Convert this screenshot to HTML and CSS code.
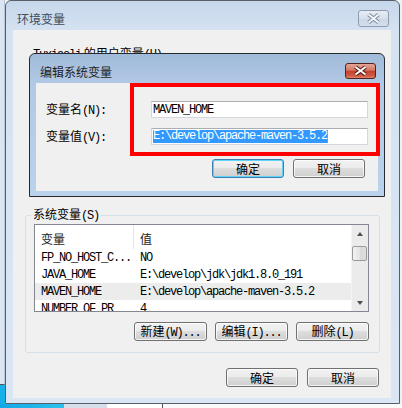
FILE: index.html
```html
<!DOCTYPE html>
<html lang="zh-CN">
<head>
<meta charset="utf-8">
<title>环境变量</title>
<link rel="stylesheet" href="styles.css">
</head>
<body>
<div class="screen">
  <div class="side-left">
    <div class="behind"></div>
    <div class="desk"></div>
  </div>

  <div class="win">
    <div class="titlebar">
      <span class="title">环境变量</span>
      <span class="cap-close inactive">
        <svg width="31" height="17" viewBox="0 0 31 17"><path d="M10.5 4.5 L20.5 12.5 M20.5 4.5 L10.5 12.5" class="xo"/><path d="M10.5 4.5 L20.5 12.5 M20.5 4.5 L10.5 12.5" class="xi"/></svg>
      </span>
    </div>
    <div class="client">
      <div class="user-label"><span class="m">Tuxiaoli</span> 的用户变量<span class="m">(U)</span></div>

      <fieldset class="group">
        <legend class="group-title">系统变量<span class="m">(S)</span></legend>
        <div class="list">
          <div class="list-body">
            <div class="row head"><div class="c1">变量</div><div class="c2">值</div></div>
            <div class="row"><div class="c1 m">FP_NO_HOST_C...</div><div class="c2 m">NO</div></div>
            <div class="row"><div class="c1 m">JAVA_HOME</div><div class="c2 m">E:\develop\jdk\jdk1.8.0_191</div></div>
            <div class="row hl"><div class="c1 m">MAVEN_HOME</div><div class="c2 m">E:\develop\apache-maven-3.5.2</div></div>
            <div class="row"><div class="c1 m">NUMBER_OF_PR</div><div class="c2 m">4</div></div>
          </div>
          <div class="scrollbar">
            <div class="sb-btn"><span class="tri up"></span></div>
            <div class="thumb"></div>
            <div class="sb-track"></div>
            <div class="sb-btn"><span class="tri down"></span></div>
          </div>
        </div>
        <div class="btn-row">
          <button class="btn w73">新建<span class="m">(W)...</span></button>
          <button class="btn w73">编辑<span class="m">(I)...</span></button>
          <button class="btn w73">删除<span class="m">(L)</span></button>
        </div>
      </fieldset>

      <div class="footer">
        <button class="btn w72">确定</button>
        <button class="btn w72">取消</button>
      </div>
    </div>
  </div>

  <div class="side-right"></div>

  <div class="taskbar">
    <div class="tb-cyan"></div>
    <div class="tb-grey"></div>
    <div class="tb-white"></div>
    <div class="tb-rest"></div>
  </div>

  <div class="dialog">
    <div class="dlg-titlebar">
      <span class="dlg-title">编辑系统变量</span>
      <span class="cap-close active">
        <svg width="31" height="16" viewBox="0 0 31 16"><path d="M10.5 4 L20.5 11.5 M20.5 4 L10.5 11.5" class="xo"/><path d="M10.5 4 L20.5 11.5 M20.5 4 L10.5 11.5" class="xi"/></svg>
      </span>
    </div>
    <div class="dlg-client">
      <div class="form">
        <label class="lbl">变量名<span class="m">(N):</span></label>
        <div class="field"><span class="m">MAVEN_HOME</span></div>
        <label class="lbl">变量值<span class="m">(V):</span></label>
        <div class="field"><span class="m sel">E:\develop\apache-maven-3.5.2</span></div>
      </div>
      <div class="dlg-buttons">
        <button class="btn w72 default">确定</button>
        <button class="btn w72">取消</button>
      </div>
    </div>
  </div>

  <div class="annot"></div>
</div>
</body>
</html>
```

FILE: styles.css
```css
* { box-sizing: border-box; }
html, body { margin: 0; padding: 0; }
body {
  width: 402px;
  height: 408px;
  overflow: hidden;
  background: #f5f7fa;
  font-family: "Noto Sans CJK SC", "Noto Sans", sans-serif;
  font-size: 12px;
  color: #000;
}
.m {
  font-family: "Liberation Mono", "Noto Sans CJK SC", monospace;
  font-size: 12px;
  letter-spacing: -1.2px;
}

.screen {
  position: relative;
  width: 402px;
  height: 408px;
  display: grid;
  grid-template-columns: 5px 395px 2px;
  grid-template-rows: 404px 4px;
}

/* desktop pieces */
.side-left { display: flex; flex-direction: column; }
.behind { height: 385px; background: #dbe6f2; border-bottom: 1px solid #4e535a; border-right: 1px solid #b8c6d6; }
.desk { flex: 1; background: #17b1ea; }
.side-right { background: #eef2f7; }
.taskbar { grid-column: 1 / 4; display: flex; }
.tb-cyan { width: 64px; background: linear-gradient(90deg, #12a8e6, #2bc1ef); }
.tb-grey { width: 43px; background: #d6dee9; }
.tb-white { width: 56px; background: #fff; border-right: 1px solid #4e535a; }
.tb-rest { flex: 1; background: #fafafa; }

/* outer window */
.win {
  display: flex;
  flex-direction: column;
  border: 1px solid #5a5f67;
  border-radius: 6px 6px 0 0;
  background: linear-gradient(#c7d7eb 0, #d4e2f1 30px, #dae6f4 100%);
  padding: 0 8px 5px 7px;
}
.titlebar {
  height: 29px;
  display: flex;
  align-items: flex-start;
  justify-content: space-between;
}
.title { margin: 10px 0 0 4px; line-height: 16px; color: #404b58; }

.cap-close {
  display: block;
  width: 31px;
  height: 17px;
  margin: 9px 2px 0 0;
  border-radius: 3px;
}
.cap-close svg { display: block; }
.cap-close.inactive {
  border: 1px solid #8f9cad;
  background: linear-gradient(#e6edf5, #d6e0ec 50%, #cbd7e5 51%, #d3dfec);
}
.cap-close.inactive svg { margin: -1px; }
.cap-close.inactive .xo { stroke: #7c899a; stroke-width: 4; fill: none; }
.cap-close.inactive .xi { stroke: #f3f6fa; stroke-width: 2; fill: none; }

.cap-close.active {
  height: 16px;
  border: 1px solid #4d2520;
  background: linear-gradient(#e6a596, #d47764 45%, #c2412b 50%, #cf5a42 85%, #e0866f);
}
.cap-close.active svg { margin: -1px; }
.cap-close.active .xo { stroke: #4a1a14; stroke-width: 4; fill: none; }
.cap-close.active .xi { stroke: #ffffff; stroke-width: 2; fill: none; }

.client {
  flex: 1;
  background: #f0f0f0;
  display: flex;
  flex-direction: column;
}
.user-label { margin: 16px 0 0 20px; line-height: 14px; }

.group {
  margin: 145px 11px 0 12px;
  padding: 0 10px 11px 8px;
  border: 1px solid #d5dfe5;
  border-radius: 3px;
  min-width: 0;
}
.group-title {
  padding: 0 2px;
  margin-left: -3px;
  line-height: 14px;
}

.list {
  margin-top: 1px;
  height: 88px;
  border: 1px solid #828790;
  background: #fff;
  display: flex;
}
.list-body { flex: 1; overflow: hidden; }
.row { display: flex; height: 17px; align-items: center; white-space: nowrap; }
.row.head { height: 24px; align-items: center; padding-top: 2px; color: #1a1a1a; }
.row.hl { background: #ececec; }
.c1 { width: 99px; padding-left: 6px; flex: none; }
.c2 { padding-left: 6px; }
.row.head .c1 { border-right: 1px solid #e3e5e8; height: 24px; margin-top: -2px; padding-top: 2px; display: flex; align-items: center; }

.scrollbar {
  width: 17px;
  flex: none;
  display: flex;
  flex-direction: column;
  background: #ebebeb;
  border-left: 1px solid #f4f4f4;
}
.sb-btn { height: 17px; display: flex; align-items: center; justify-content: center; }
.tri { width: 0; height: 0; border-left: 3.5px solid transparent; border-right: 3.5px solid transparent; }
.tri.up { border-bottom: 4px solid #505050; }
.tri.down { border-top: 4px solid #505050; }
.thumb {
  margin: 4px 1px 0 0;
  height: 15px;
  border: 1px solid #9a9a9a;
  border-radius: 2px;
  background: linear-gradient(90deg, #f2f2f2, #e4e4e4 50%, #d8d8d8 51%, #dedede);
}
.sb-track { flex: 1; }

.btn {
  height: 19px;
  padding: 0;
  border: 1px solid #707070;
  border-radius: 3px;
  background: linear-gradient(#f2f2f2 0%, #ebebeb 49%, #dddddd 50%, #cfcfcf 100%);
  box-shadow: inset 0 0 0 1px rgba(255, 255, 255, 0.75);
  font-family: "Noto Sans CJK SC", sans-serif;
  font-size: 12px;
  line-height: 15px;
  color: #000;
  text-align: center;
  white-space: nowrap;
}
.w73 { width: 73px; }
.w72 { width: 72px; }
.btn.default {
  border-color: #3c7fb1;
  box-shadow: inset 0 0 0 1px #5fd3f9;
}

.btn-row {
  margin-top: 10px;
  display: flex;
  justify-content: flex-end;
  gap: 8px;
}
.footer {
  margin-top: 15px;
  display: flex;
  justify-content: flex-end;
  gap: 9px;
  padding-right: 12px;
}

/* dialog over the window */
.dialog {
  position: absolute;
  left: 29px;
  top: 53px;
  width: 356px;
  height: 144px;
  border: 1px solid #262a30;
  border-radius: 6px 6px 0 0;
  background: linear-gradient(#a0bad9 0, #b2c9e5 30px, #bbd2ec 100%);
  padding: 0 6px 5px 6px;
  display: flex;
  flex-direction: column;
}
.dlg-titlebar {
  height: 29px;
  display: flex;
  justify-content: space-between;
  align-items: flex-start;
}
.dlg-title { margin: 10px 0 0 4px; line-height: 16px; color: #1e1e1e; }
.dlg-client {
  flex: 1;
  background: #f0f0f0;
  padding: 18px 10px 0 10px;
  display: flex;
  flex-direction: column;
}
.form {
  display: grid;
  grid-template-columns: auto 217px;
  grid-auto-rows: 17px;
  row-gap: 10px;
  justify-content: space-between;
  align-items: center;
}
.lbl { line-height: 14px; }
.field {
  height: 17px;
  border: 1px solid #d4d7dd;
  border-top-color: #abadb3;
  background: #fff;
  padding-left: 1px;
  display: flex;
  align-items: center;
  white-space: nowrap;
}
.sel {
  background: #3399ff;
  color: #fff;
  line-height: 13px;
  box-shadow: 1px 0 0 #e8801e;
}
.dlg-buttons {
  margin-top: 14px;
  padding-right: 3px;
  display: flex;
  justify-content: flex-end;
  gap: 9px;
}

.annot {
  position: absolute;
  left: 130px;
  top: 83px;
  width: 250px;
  height: 73px;
  border: 4px solid #ff0000;
}
```
